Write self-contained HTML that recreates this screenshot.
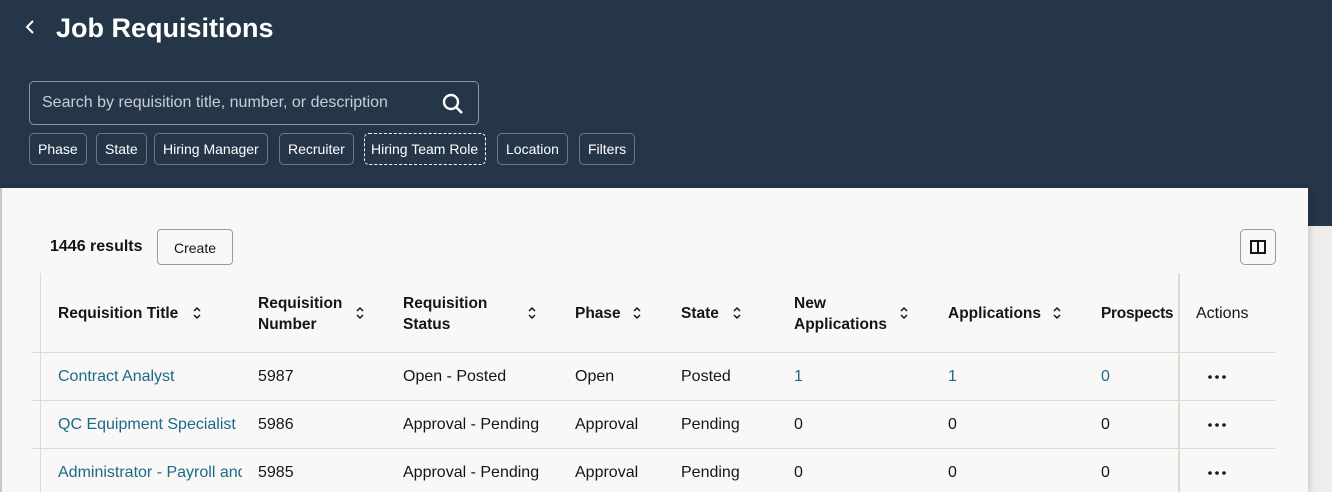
<!DOCTYPE html>
<html><head><style>
*{margin:0;padding:0;box-sizing:border-box}
body{width:1332px;height:492px;overflow:hidden;background:#eeedec;font-family:"Liberation Sans",sans-serif;position:relative;color:#161513}
.hdr{position:absolute;left:0;top:0;width:1332px;height:226px;background:#253648}
.a{position:absolute;white-space:nowrap}
.chip{position:absolute;top:133px;height:32px;border:1px solid #6d7986;border-radius:5px;color:#fff;font-size:14px;line-height:30px;padding:0 8px;white-space:nowrap}
.panel{position:absolute;left:0;top:188px;width:1308px;height:304px;background:#f9f8f6;box-shadow:2px 0 6px rgba(0,0,0,.15)}
.th{position:absolute;font-size:15.5px;font-weight:bold;color:#161513;line-height:21px;white-space:nowrap}
.td{position:absolute;font-size:16px;line-height:20px;color:#161513;white-space:nowrap}
.l{color:#1b6a8c}
.hl{position:absolute;left:32px;width:1244px;height:1px;background:#dcdad7}
.sort{position:absolute;width:10px;height:14px}
.dots{position:absolute;left:1206px;width:24px;height:6px}
</style></head><body>
<div class="hdr"></div>
<svg class="a" style="left:24px;top:19px" width="12" height="16"><path d="M9 2 L3 8 L9 14" stroke="#fff" stroke-width="2" fill="none"/></svg>
<div class="a" style="left:56px;top:13px;font-size:27px;font-weight:bold;color:#fff">Job Requisitions</div>
<div class="a" style="left:29px;top:81px;width:450px;height:44px;border:1px solid #8a96a3;border-radius:5px"></div>
<div class="a" style="left:42px;top:94px;font-size:16px;color:#c9ced4">Search by requisition title, number, or description</div>
<svg class="a" style="left:441px;top:92px" width="24" height="24"><circle cx="10" cy="10" r="7" stroke="#fff" stroke-width="2.4" fill="none"/><path d="M15 15 L21 21" stroke="#fff" stroke-width="2.6"/></svg>
<div class="chip" style="left:29px">Phase</div>
<div class="chip" style="left:96px">State</div>
<div class="chip" style="left:154px">Hiring Manager</div>
<div class="chip" style="left:279px">Recruiter</div>
<div class="chip" style="left:364px;width:122px;padding:0 6px;border:1px dashed #fff">Hiring Team Role</div>
<div class="chip" style="left:497px">Location</div>
<div class="chip" style="left:579px">Filters</div>
<div class="panel"></div>
<div class="a" style="left:0;top:188px;width:2px;height:304px;background:#c9c7c4"></div>
<div class="a" style="left:50px;top:238px;font-size:16px;font-weight:bold">1446 results</div>
<div class="a" style="left:157px;top:229px;width:76px;height:36px;border:1px solid #9e9b97;border-radius:4px;font-size:14px;line-height:36px;text-align:center">Create</div>
<div class="a" style="left:1240px;top:229px;width:36px;height:36px;border:1px solid #9e9b97;border-radius:5px"></div>
<div class="a" style="left:1250px;top:240px;width:16px;height:14px;border:2px solid #161513"></div>
<div class="a" style="left:1257px;top:240px;width:2px;height:14px;background:#161513"></div>
<div class="a" style="left:40px;top:273px;width:1px;height:219px;background:#dcdad7"></div>
<div class="a" style="left:1178px;top:273px;width:2px;height:219px;background:#dcdad7"></div>
<div class="hl" style="top:352px"></div><div class="hl" style="top:400px"></div><div class="hl" style="top:448px"></div>
<div class="th" style="left:58px;top:303px">Requisition Title</div>
<div class="th" style="left:258px;top:293px">Requisition<br>Number</div>
<div class="th" style="left:403px;top:293px">Requisition<br>Status</div>
<div class="th" style="left:575px;top:303px">Phase</div>
<div class="th" style="left:681px;top:303px">State</div>
<div class="th" style="left:794px;top:293px">New<br>Applications</div>
<div class="th" style="left:948px;top:303px">Applications</div>
<div class="th" style="left:1101px;top:303px;letter-spacing:-0.3px">Prospects</div>
<div class="th" style="left:1196px;top:303px;font-weight:normal;font-size:16px">Actions</div>
<svg width="0" height="0" style="position:absolute"><defs><path id="s" d="M2 5 L5 2 L8 5 M2 9 L5 12 L8 9" stroke="#161513" stroke-width="1.5" fill="none"/></defs></svg>
<svg class="sort" style="left:192px;top:306px"><use href="#s"/></svg>
<svg class="sort" style="left:355px;top:306px"><use href="#s"/></svg>
<svg class="sort" style="left:527px;top:306px"><use href="#s"/></svg>
<svg class="sort" style="left:632px;top:306px"><use href="#s"/></svg>
<svg class="sort" style="left:732px;top:306px"><use href="#s"/></svg>
<svg class="sort" style="left:899px;top:306px"><use href="#s"/></svg>
<svg class="sort" style="left:1052px;top:306px"><use href="#s"/></svg>
<svg width="0" height="0" style="position:absolute"><defs><g id="d" fill="#161513"><circle cx="4" cy="3" r="1.8"/><circle cx="11" cy="3" r="1.8"/><circle cx="18" cy="3" r="1.8"/></g></defs></svg>
<div class="td l" style="left:58px;top:367px">Contract Analyst</div>
<div class="td" style="left:258px;top:367px">5987</div>
<div class="td" style="left:403px;top:367px">Open - Posted</div>
<div class="td" style="left:575px;top:367px">Open</div>
<div class="td" style="left:681px;top:367px">Posted</div>
<div class="td l" style="left:794px;top:367px">1</div>
<div class="td l" style="left:948px;top:367px">1</div>
<div class="td l" style="left:1101px;top:367px">0</div>
<svg class="dots" style="top:374px"><use href="#d"/></svg>
<div class="td l" style="left:58px;top:415px">QC Equipment Specialist</div>
<div class="td" style="left:258px;top:415px">5986</div>
<div class="td" style="left:403px;top:415px">Approval - Pending</div>
<div class="td" style="left:575px;top:415px">Approval</div>
<div class="td" style="left:681px;top:415px">Pending</div>
<div class="td" style="left:794px;top:415px">0</div>
<div class="td" style="left:948px;top:415px">0</div>
<div class="td" style="left:1101px;top:415px">0</div>
<svg class="dots" style="top:422px"><use href="#d"/></svg>
<div class="td l" style="left:58px;top:463px;width:184px;overflow:hidden">Administrator - Payroll and Benefits</div>
<div class="td" style="left:258px;top:463px">5985</div>
<div class="td" style="left:403px;top:463px">Approval - Pending</div>
<div class="td" style="left:575px;top:463px">Approval</div>
<div class="td" style="left:681px;top:463px">Pending</div>
<div class="td" style="left:794px;top:463px">0</div>
<div class="td" style="left:948px;top:463px">0</div>
<div class="td" style="left:1101px;top:463px">0</div>
<svg class="dots" style="top:470px"><use href="#d"/></svg>
</body></html>
